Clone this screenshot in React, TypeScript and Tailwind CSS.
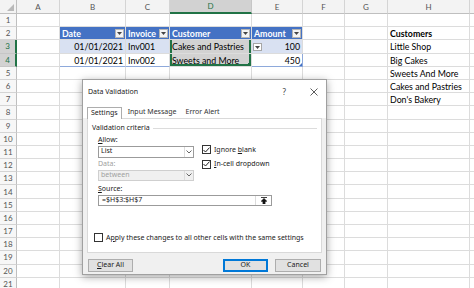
import React from "react";

const letters = ["A", "B", "C", "D", "E", "F", "G", "H", ""];
const cell = "relative h-[13.2px] border-r border-b border-[#dcdcdc] px-[2px] leading-[13px] whitespace-nowrap overflow-hidden";

function HeaderDrop() {
  return (
    <span className="absolute right-[1px] top-[2px] flex h-[9px] w-[9px] items-center justify-center border border-[#b4b4b4] bg-[#f4f4f4]">
      <svg width="5" height="3" viewBox="0 0 5 3">
        <path d="M0 0h5L2.5 3z" fill="#444" />
      </svg>
    </span>
  );
}

type Cell = { text?: string; cls?: string; extra?: React.ReactNode };

function getCell(row: number, col: string): Cell {
  const head = "bg-[#4472c4] text-white font-bold border-[#4472c4]";
  const band = "bg-[#d9e1f2] border-[#b4c6e7]";
  const plain = "bg-white border-[#b4c6e7]";
  if (row === 2) {
    if (col === "B") return { text: "Date", cls: head, extra: <HeaderDrop /> };
    if (col === "C") return { text: "Invoice", cls: head, extra: <HeaderDrop /> };
    if (col === "D") return { text: "Customer", cls: head, extra: <HeaderDrop /> };
    if (col === "E") return { text: "Amount", cls: head, extra: <HeaderDrop /> };
    if (col === "H") return { text: "Customers", cls: "font-bold" };
  }
  if (row === 3) {
    if (col === "B") return { text: "01/01/2021", cls: band + " text-right" };
    if (col === "C") return { text: "Inv001", cls: band };
    if (col === "D")
      return {
        text: "Cakes and Pastries",
        cls: "bg-[#d2d2d2] border-[#b4c6e7] shadow-[inset_2px_0_0_#217346,inset_-2px_0_0_#217346]",
      };
    if (col === "E")
      return {
        text: "100",
        cls: band + " text-right",
        extra: (
          <span className="absolute left-[1px] top-[3px] flex h-[8px] w-[9px] items-center justify-center border border-[#a6a6a6] bg-white">
            <svg width="5" height="3" viewBox="0 0 5 3">
              <path d="M0 0h5L2.5 3z" fill="#444" />
            </svg>
          </span>
        ),
      };
    if (col === "H") return { text: "Little Shop" };
  }
  if (row === 4) {
    if (col === "B") return { text: "01/01/2021", cls: plain + " text-right border-b-[#8ea9db]" };
    if (col === "C") return { text: "Inv002", cls: plain + " border-b-[#8ea9db]" };
    if (col === "D")
      return {
        text: "Sweets and More",
        cls: "bg-[#d2d2d2] border-[#8ea9db] shadow-[inset_2px_0_0_#217346,inset_-2px_-2px_0_#217346]",
        extra: <span className="absolute right-[-1px] bottom-[-1px] h-[4px] w-[4px] bg-[#217346]" />,
      };
    if (col === "E")
      return {
        text: "450",
        cls: plain + " text-right border-b-[#8ea9db] border-r-[#8ea9db]",
        extra: (
          <svg className="absolute right-0 bottom-0" width="3" height="3" viewBox="0 0 3 3">
            <path d="M3 0v3H0z" fill="#4472c4" />
          </svg>
        ),
      };
    if (col === "H") return { text: "Big Cakes" };
  }
  if (col === "H") {
    if (row === 5) return { text: "Sweets And More" };
    if (row === 6) return { text: "Cakes and Pastries" };
    if (row === 7) return { text: "Don's Bakery" };
  }
  return {};
}

function Check({ checked }: { checked: boolean }) {
  return (
    <span className="flex h-[9px] w-[9px] shrink-0 items-center justify-center border border-[#333] bg-white">
      {checked && (
        <svg width="7" height="6" viewBox="0 0 7 6">
          <path d="M0.5 3l2 2L6.5 0.6" fill="none" stroke="#222" strokeWidth="1" />
        </svg>
      )}
    </span>
  );
}

function Chevron() {
  return (
    <svg width="6" height="4" viewBox="0 0 6 4">
      <path d="M0.5 0.5L3 3l2.5-2.5" fill="none" stroke="#555" strokeWidth="0.9" />
    </svg>
  );
}

function Dialog() {
  return (
    <div className="absolute left-[82px] top-[79px] flex h-[196px] w-[245px] flex-col border border-[#a0a0a0] bg-[#f0f0f0] font-['Segoe_UI','Noto_Sans',sans-serif] text-[7px] text-[#1a1a1a] shadow-[0_2px_8px_rgba(0,0,0,0.35)]">
      <div className="flex h-[24px] items-center bg-white pl-[5px] pr-[8px]">
        <span className="flex-1">Data Validation</span>
        <span className="mr-[24px] text-[8px] text-[#444]">?</span>
        <svg width="8" height="8" viewBox="0 0 8 8">
          <path d="M0.5 0.5l7 7M7.5 0.5l-7 7" stroke="#333" strokeWidth="0.8" />
        </svg>
      </div>
      <div className="flex h-[14px] items-end gap-[2px] bg-white pl-[4px]">
        <span className="relative z-10 mb-[-1px] flex h-[12px] items-center border border-b-0 border-[#adadad] bg-white px-[3px]">
          Settings
        </span>
        <span className="flex h-[11px] items-center px-[4px] text-[#333]">Input Message</span>
        <span className="flex h-[11px] items-center px-[3px] text-[#333]">Error Alert</span>
      </div>
      <div className="mx-[4px] flex h-[135px] flex-col border border-[#d9d9d9] bg-white px-[4px]">
        <div className="mt-[4px] flex items-center gap-[3px]">
          <span>Validation criteria</span>
          <span className="h-px flex-1 bg-[#dcdcdc]" />
        </div>
        <div className="mt-[1px] flex pl-[6px]">
          <div className="flex w-[96px] flex-col">
            <span className="leading-[10px]"><u>A</u>llow:</span>
            <div className="mt-[1px] flex h-[12px] items-center border border-[#9b9b9b] bg-white pl-[2px]">
              <span className="flex-1">List</span>
              <span className="flex h-full w-[9px] items-center justify-center border-l border-[#dcdcdc]">
                <Chevron />
              </span>
            </div>
            <span className="mt-[1px] leading-[10px] text-[#a0a0a0]">Data:</span>
            <div className="mt-[1px] flex h-[11px] items-center border border-[#cfcfcf] bg-[#f0f0f0] pl-[2px] text-[#a0a0a0]">
              <span className="flex-1">between</span>
              <span className="flex h-full w-[9px] items-center justify-center border-l border-[#dcdcdc]">
                <Chevron />
              </span>
            </div>
          </div>
          <div className="ml-[8px] mt-[10px] flex flex-col gap-[4px]">
            <div className="flex items-center gap-[3px]">
              <Check checked />
              <span>Ignore <u>b</u>lank</span>
            </div>
            <div className="flex items-center gap-[3px]">
              <Check checked />
              <span><u>I</u>n-cell dropdown</span>
            </div>
          </div>
        </div>
        <div className="pl-[6px]">
          <div className="mt-[3px] leading-[10px]"><u>S</u>ource:</div>
          <div className="mt-[1px] flex h-[11px] w-[174px] items-center border border-[#9b9b9b] bg-white pl-[3px]">
            <span className="flex-1">=$H$3:$H$7</span>
            <span className="flex h-full w-[16px] items-center justify-center border-l border-[#dcdcdc]">
              <svg width="6" height="7" viewBox="0 0 6 7">
                <path d="M0 0.5h6M3 1.5L0.3 4.3h1.7V7h2V4.3h1.7z" stroke="#111" strokeWidth="0.8" fill="#111" />
              </svg>
            </span>
          </div>
        </div>
        <div className="mt-auto mb-[9px] flex items-center gap-[3px] pl-[2px]">
          <Check checked={false} />
          <span>A<u>p</u>ply these changes to all other cells with the same settings</span>
        </div>
      </div>
      <div className="mx-[5px] mt-[6px] flex items-center">
        <span className="flex h-[13px] w-[45px] items-center justify-center border border-[#adadad] bg-[#e1e1e1]">
          <span><u>C</u>lear All</span>
        </span>
        <span className="ml-auto flex h-[13px] w-[45px] items-center justify-center border border-[#0078d7] bg-[#e1e1e1] shadow-[inset_0_0_0_1px_#0078d7]">
          OK
        </span>
        <span className="ml-[7px] flex h-[13px] w-[46px] items-center justify-center border border-[#adadad] bg-[#e1e1e1]">
          Cancel
        </span>
      </div>
    </div>
  );
}

export default function App() {
  const rows = Array.from({ length: 21 }, (_, i) => i + 1);
  return (
    <div className="relative h-[288px] w-[474px] overflow-hidden bg-white font-['Lato','Noto_Sans',sans-serif] text-[8.8px] text-black">
      <div className="grid grid-cols-[17px_43px_66px_44px_82px_51px_42px_43px_82px_1fr]">
        <div className="relative h-[14px] border-r border-b border-[#bfbfbf] bg-[#f3f3f3]">
          <svg className="absolute right-[2px] bottom-[2px]" width="7" height="7" viewBox="0 0 7 7">
            <path d="M7 0v7H0z" fill="#b9b9b9" />
          </svg>
        </div>
        {letters.map((l) => (
          <div
            key={l || "x"}
            className={
              l === "D"
                ? "flex h-[14px] items-center justify-center border-r border-b-2 border-[#c6c6c6] border-b-[#217346] bg-[#d2d2d2] text-[8px] text-[#217346]"
                : "flex h-[14px] items-center justify-center border-r border-b border-[#d4d4d4] border-b-[#bfbfbf] bg-[#f3f3f3] text-[8px] text-[#555]"
            }
          >
            {l}
          </div>
        ))}
        {rows.map((r) => (
          <React.Fragment key={r}>
            <div
              className={
                r === 3 || r === 4
                  ? "flex h-[13.2px] items-center justify-center border-r-2 border-b border-[#c6c6c6] border-r-[#217346] bg-[#d2d2d2] text-[8px] text-[#217346]"
                  : "flex h-[13.2px] items-center justify-center border-r border-b border-[#d4d4d4] border-r-[#bfbfbf] bg-[#f7f7f7] text-[8px] text-[#555]"
              }
            >
              {r}
            </div>
            {letters.map((l) => {
              const c = getCell(r, l);
              return (
                <div key={l || "x"} className={cell + " " + (c.cls ?? "bg-white")}>
                  {c.text}
                  {c.extra}
                </div>
              );
            })}
          </React.Fragment>
        ))}
      </div>
      <Dialog />
    </div>
  );
}
